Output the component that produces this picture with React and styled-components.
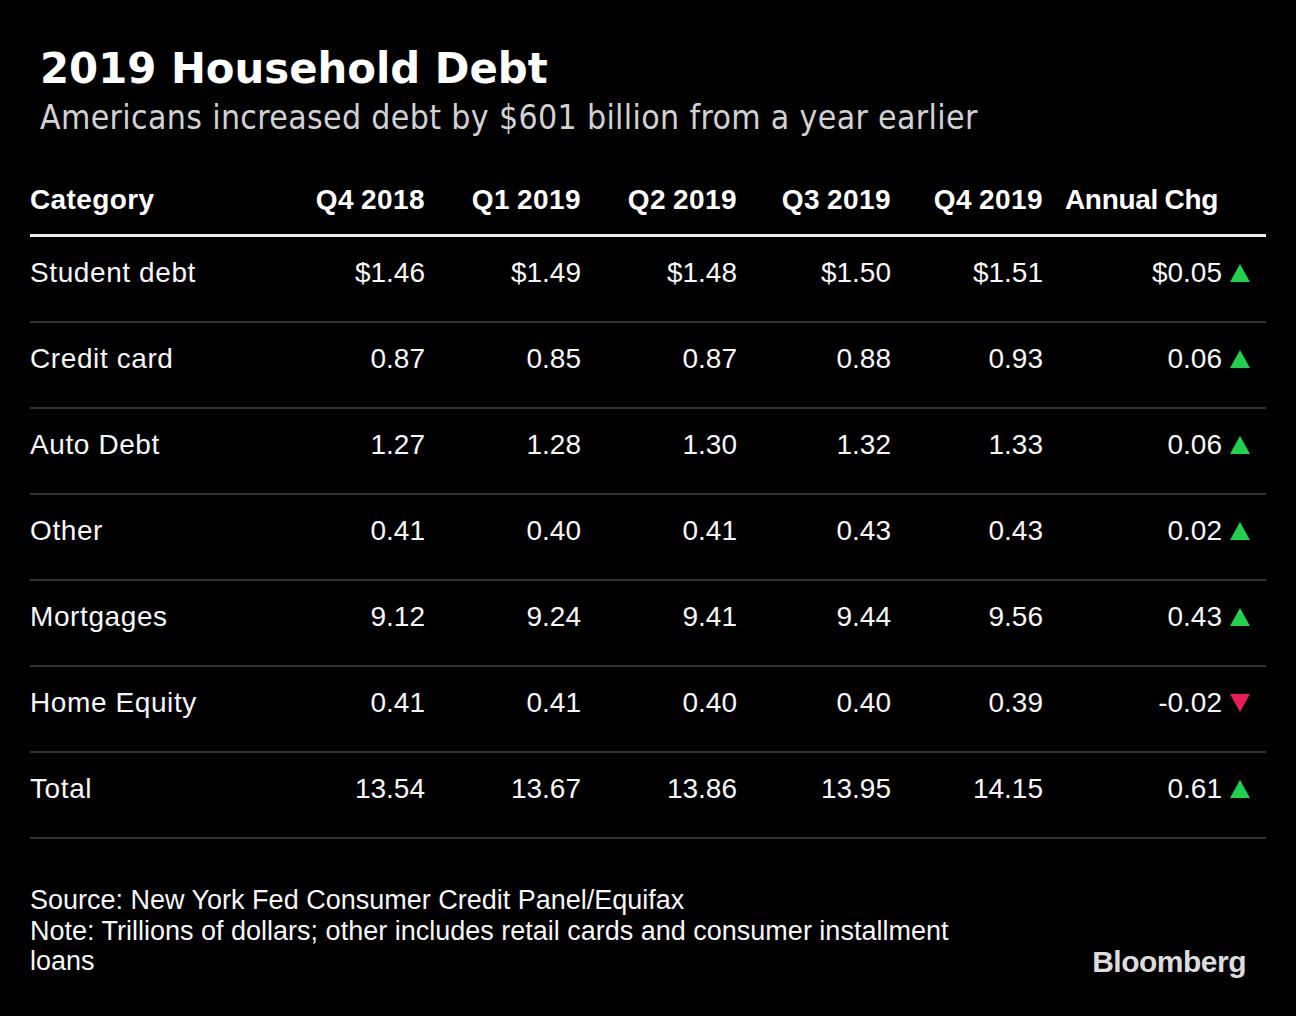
import React from 'react'
import styled, { createGlobalStyle } from 'styled-components'

const GlobalStyle = createGlobalStyle`
  html, body {
    margin: 0;
    padding: 0;
    background: #000;
  }
`

const columns = '240px 155px 156px 156px 154px 152px 223px'

const rows = [
  ['Student debt', '$1.46', '$1.49', '$1.48', '$1.50', '$1.51', '$0.05', 'up'],
  ['Credit card', '0.87', '0.85', '0.87', '0.88', '0.93', '0.06', 'up'],
  ['Auto Debt', '1.27', '1.28', '1.30', '1.32', '1.33', '0.06', 'up'],
  ['Other', '0.41', '0.40', '0.41', '0.43', '0.43', '0.02', 'up'],
  ['Mortgages', '9.12', '9.24', '9.41', '9.44', '9.56', '0.43', 'up'],
  ['Home Equity', '0.41', '0.41', '0.40', '0.40', '0.39', '-0.02', 'down'],
  ['Total', '13.54', '13.67', '13.86', '13.95', '14.15', '0.61', 'up'],
]

const headers = ['Q4 2018', 'Q1 2019', 'Q2 2019', 'Q3 2019', 'Q4 2019']

const Arrow = ({ dir }) => (
  <ArrowIcon width="20" height="20" viewBox="0 0 20 20">
    {dir === 'up' ? (
      <polygon points="10,1 20,19 0,19" fill="#1fd14d" />
    ) : (
      <polygon points="0,1 20,1 10,19" fill="#ea1a5b" />
    )}
  </ArrowIcon>
)

const App = () => {
  return (
    <Page>
      <GlobalStyle />
      <Title>2019 Household Debt</Title>
      <Subtitle>Americans increased debt by $601 billion from a year earlier</Subtitle>

      <Table>
        <HeaderRow>
          <HeadCell $wide>Category</HeadCell>
          {headers.map((h) => (
            <HeadCell key={h} $right $wide>{h}</HeadCell>
          ))}
          <HeadCell $right $last>Annual Chg</HeadCell>
        </HeaderRow>

        {rows.map((r) => (
          <Row key={r[0]}>
            <Cell $label>{r[0]}</Cell>
            {r.slice(1, 6).map((v, i) => (
              <Cell key={i} $right>{v}</Cell>
            ))}
            <ChangeCell>
              {r[6]}
              <Arrow dir={r[7]} />
            </ChangeCell>
          </Row>
        ))}
      </Table>

      <Footer>
        <Notes>
          Source: New York Fed Consumer Credit Panel/Equifax
          <br />
          Note: Trillions of dollars; other includes retail cards and consumer installment
          <br />
          loans
        </Notes>
        <Logo>Bloomberg</Logo>
      </Footer>
    </Page>
  )
}

export default App

const Page = styled.div`
  box-sizing: border-box;
  width: 1296px;
  min-height: 1016px;
  padding: 48px 30px 0 30px;
  background: #000;
  color: #fff;
`

const Title = styled.h1`
  margin: 0;
  padding-left: 10px;
  font-family: 'DejaVu Sans', sans-serif;
  font-weight: 700;
  font-size: 41.8px;
  line-height: 42px;
  color: #fff;
`

const Subtitle = styled.div`
  margin-top: 11px;
  padding-left: 10px;
  font-family: 'DejaVu Sans Condensed', 'DejaVu Sans', sans-serif;
  font-stretch: condensed;
  font-weight: 300;
  font-size: 33.5px;
  line-height: 33px;
  letter-spacing: 0.35px;
  color: #d2d2d2;
`

const Table = styled.div`
  margin-top: 50px;
  font-family: 'Liberation Sans', Arial, sans-serif;
`

const HeaderRow = styled.div`
  display: grid;
  grid-template-columns: ${columns};
  padding-bottom: 18px;
  border-bottom: 3px solid #ededed;
`

const HeadCell = styled.div`
  font-size: 28px;
  line-height: 32px;
  font-weight: 700;
  word-spacing: -1px;
  letter-spacing: ${(p) => (p.$wide ? '0.4px' : '-0.3px')};
  text-align: ${(p) => (p.$right ? 'right' : 'left')};
  padding-right: ${(p) => (p.$last ? '48px' : '0')};
  white-space: nowrap;
`

const Row = styled.div`
  box-sizing: border-box;
  display: grid;
  grid-template-columns: ${columns};
  height: 86px;
  padding-top: 20px;
  border-bottom: 2px solid #333;
`

const Cell = styled.div`
  font-size: 28px;
  line-height: 32px;
  letter-spacing: ${(p) => (p.$label ? '0.6px' : '0')};
  color: #f7f7f7;
  text-align: ${(p) => (p.$right ? 'right' : 'left')};
  white-space: nowrap;
`

const ChangeCell = styled.div`
  display: flex;
  align-items: center;
  justify-content: flex-end;
  height: 32px;
  padding-right: 16px;
  font-size: 28px;
  line-height: 32px;
  color: #f7f7f7;
  white-space: nowrap;
`

const ArrowIcon = styled.svg`
  display: block;
  margin-left: 8px;
  flex-shrink: 0;
`

const Footer = styled.div`
  display: flex;
  justify-content: space-between;
  align-items: flex-end;
  margin-top: 46px;
`

const Notes = styled.div`
  font-family: 'Liberation Sans', Arial, sans-serif;
  font-size: 27px;
  line-height: 30.5px;
  color: #f7f7f7;
`

const Logo = styled.div`
  margin-right: 20px;
  margin-bottom: 0;
  font-family: 'Liberation Sans', Arial, sans-serif;
  font-weight: 700;
  font-size: 30px;
  line-height: 30px;
  letter-spacing: -0.5px;
  color: #dcdcdc;
`
